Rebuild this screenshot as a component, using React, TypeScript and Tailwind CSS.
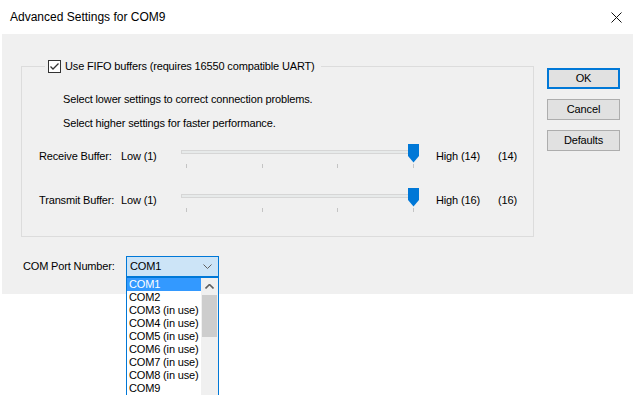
import React from "react";

function Slider() {
  return (
    <svg width="240" height="25" viewBox="0 0 240 25" className="shrink-0">
      <rect x="0.5" y="6.5" width="232" height="3" fill="#e7eaea" stroke="#d6d6d6" />
      {[5, 81, 156, 232].map((x) => (
        <line key={x} x1={x + 0.5} y1="20" x2={x + 0.5} y2="24" stroke="#c4c4c4" />
      ))}
      <polygon points="227,0 238,0 238,12 232.5,18.5 227,12" fill="#0078d7" />
    </svg>
  );
}

function BufferRow({ label, high, value }: { label: string; high: string; value: string }) {
  return (
    <div className="flex items-start h-[25px] pl-[17px]">
      <span className="w-[82px] mt-[6px] leading-[13px]">{label}</span>
      <span className="w-[60px] mt-[6px] leading-[13px]">Low (1)</span>
      <Slider />
      <span className="ml-[15px] w-[62px] mt-[6px] leading-[13px]">{high}</span>
      <span className="mt-[6px] leading-[13px]">{value}</span>
    </div>
  );
}

function Button({ children, primary }: { children: React.ReactNode; primary?: boolean }) {
  return (
    <div
      className={
        primary
          ? "w-[73px] h-[21px] flex items-center justify-center bg-[#e1e1e1] border-2 border-[#0078d7]"
          : "w-[73px] h-[21px] flex items-center justify-center bg-[#e1e1e1] border border-[#adadad]"
      }
    >
      {children}
    </div>
  );
}

const ports = [
  "COM1",
  "COM2",
  "COM3 (in use)",
  "COM4 (in use)",
  "COM5 (in use)",
  "COM6 (in use)",
  "COM7 (in use)",
  "COM8 (in use)",
  "COM9",
];

export default function App() {
  return (
    <div className="w-[635px] h-[395px] bg-white overflow-hidden relative text-black font-['Liberation_Sans',Arial,sans-serif] text-[11px] tracking-[-0.15px]">
      {/* title bar */}
      <div className="h-[34px] flex items-center justify-between pl-[10px] pr-[13px]">
        <span className="text-[12px] tracking-normal">Advanced Settings for COM9</span>
        <svg width="11" height="11" viewBox="0 0 11 11">
          <path d="M0.5 0.5 L10.5 10.5 M10.5 0.5 L0.5 10.5" stroke="#111" strokeWidth="1" />
        </svg>
      </div>

      {/* body */}
      <div className="ml-[2px] w-[631px] h-[260px] bg-[#f0f0f0] flex pl-[19px]">
        <div className="flex flex-col">
          <div className="mt-[32px] w-[513px] h-[171px] border border-[#dcdcdc] relative">
            <div className="absolute left-[23px] top-[-8px] h-[14px] flex items-center gap-[4px] pl-[3px] pr-[6px] bg-[#f0f0f0]">
              <svg width="13" height="13" viewBox="0 0 13 13">
                <rect x="0.5" y="0.5" width="12" height="12" fill="#fff" stroke="#333" />
                <path d="M2.5 6.5 L5 9 L10.5 3.5" fill="none" stroke="#333" strokeWidth="1.3" />
              </svg>
              <span className="leading-[13px]">Use FIFO buffers (requires 16550 compatible UART)</span>
            </div>
            <div className="mt-[26px] pl-[41px] leading-[13px]">Select lower settings to correct connection problems.</div>
            <div className="mt-[11px] pl-[41px] leading-[13px]">Select higher settings for faster performance.</div>
            <div className="mt-[14px]">
              <BufferRow label="Receive Buffer:" high="High (14)" value="(14)" />
            </div>
            <div className="mt-[19px]">
              <BufferRow label="Transmit Buffer:" high="High (16)" value="(16)" />
            </div>
          </div>

          <div className="mt-[19px] ml-[2px] flex items-center">
            <span className="w-[103px]">COM Port Number:</span>
            <div className="relative">
              <div className="w-[93px] h-[21px] border border-[#0078d7] bg-[#cce4f7] flex items-center justify-between pl-[3px] pr-[6px]">
                <span>COM1</span>
                <svg width="9" height="5" viewBox="0 0 9 5">
                  <path d="M0.5 0.5 L4.5 4.5 L8.5 0.5" fill="none" stroke="#606060" />
                </svg>
              </div>
              <div className="absolute left-0 top-[21px] w-[93px] h-[140px] bg-white border border-[#0078d7] flex">
                <div className="w-[74px] flex flex-col">
                  {ports.map((p, i) => (
                    <div
                      key={p}
                      className={
                        i === 0
                          ? "h-[13px] leading-[13px] pl-[2px] bg-[#3399ff] text-white whitespace-nowrap"
                          : "h-[13px] leading-[13px] pl-[2px] whitespace-nowrap"
                      }
                    >
                      {p}
                    </div>
                  ))}
                </div>
                <div className="w-[17px] bg-[#f0f0f0] flex flex-col items-center">
                  <div className="h-[17px] flex items-center justify-center">
                    <svg width="9" height="5" viewBox="0 0 9 5">
                      <path d="M0.5 4.5 L4.5 0.5 L8.5 4.5" fill="none" stroke="#606060" strokeWidth="1.6" />
                    </svg>
                  </div>
                  <div className="w-[15px] h-[42px] bg-[#cdcdcd]" />
                </div>
              </div>
            </div>
          </div>
        </div>

        <div className="ml-[13px] mt-[34px] flex flex-col gap-[10px]">
          <Button primary>OK</Button>
          <Button>Cancel</Button>
          <Button>Defaults</Button>
        </div>
      </div>
    </div>
  );
}
